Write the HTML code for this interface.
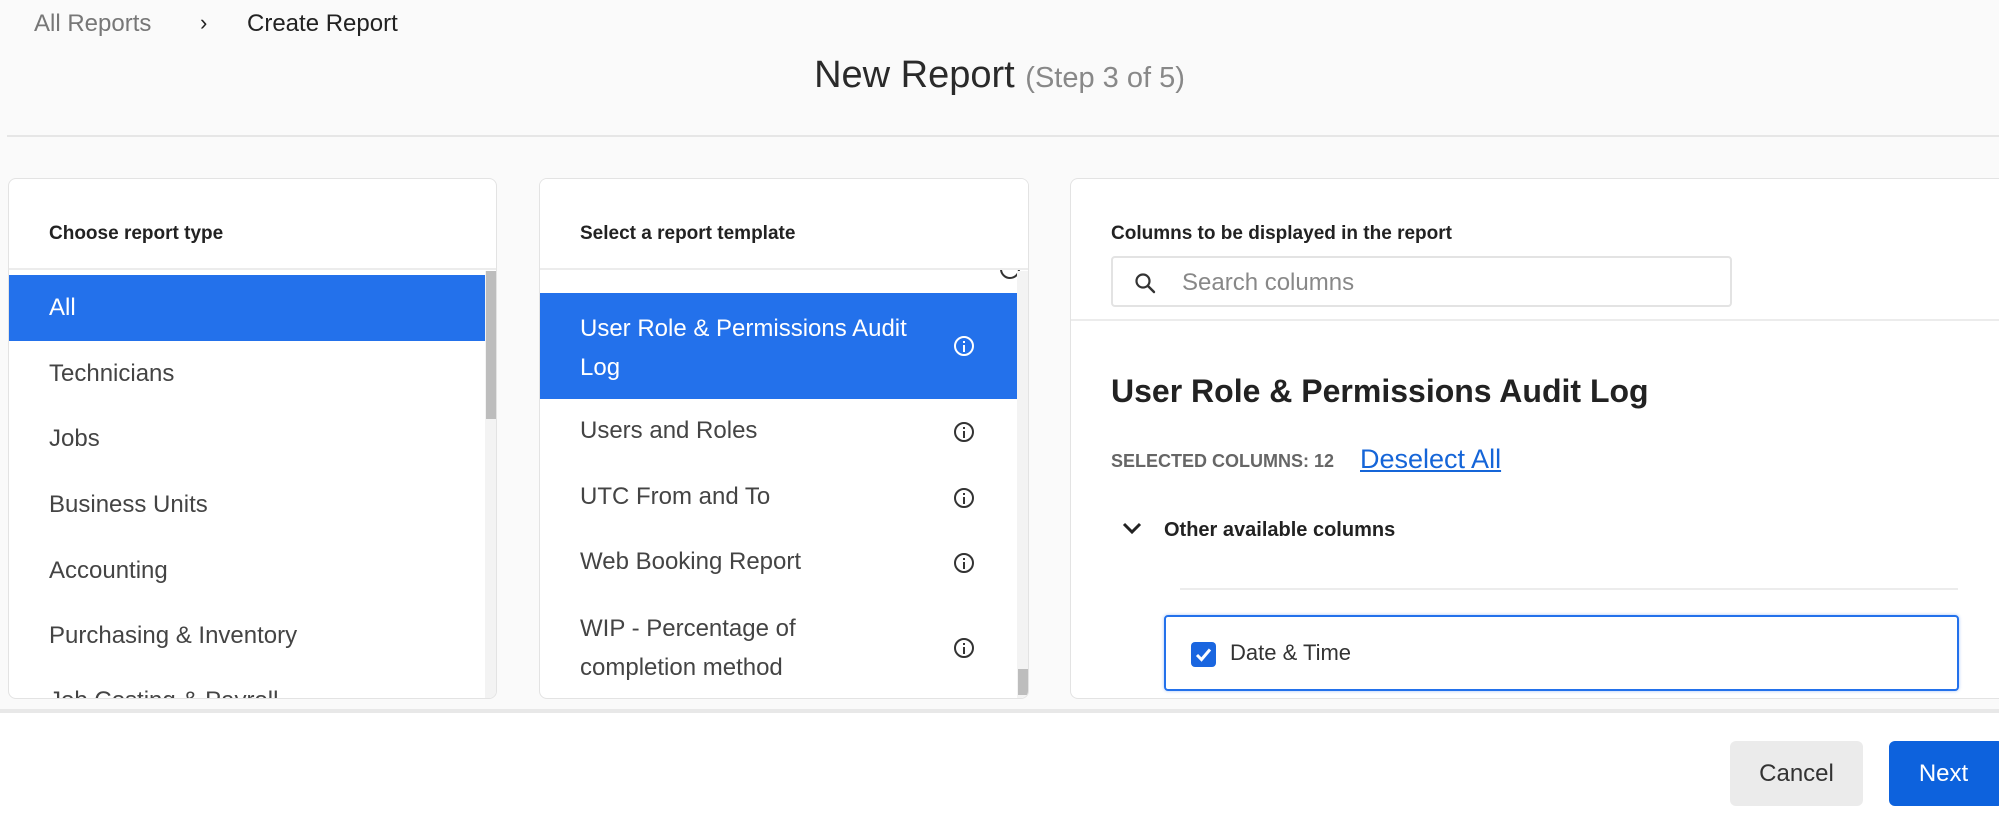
<!DOCTYPE html>
<html><head><meta charset="utf-8"><style>
*{box-sizing:border-box;margin:0;padding:0}
body{width:1999px;height:817px;overflow:hidden;background:#fafafa;font-family:"Liberation Sans",sans-serif;color:#2a2a2a;position:relative}
.abs{position:absolute}
.panel{position:absolute;top:178px;height:521px;background:#fff;border:1px solid #e3e3e3;border-radius:8px;overflow:hidden}
.ph{position:absolute;left:0;right:0;top:0;height:91px;border-bottom:2px solid #ececec}
.ph span{position:absolute;top:44px;font-size:19px;font-weight:bold;color:#222}
.item{position:absolute;left:0;font-size:24px;color:#444}
.info{position:absolute;width:20px;height:20px;border:2px solid #333;border-radius:50%}
.info:before{content:"";position:absolute;left:7px;top:3px;width:2px;height:2px;background:#333}
.info:after{content:"";position:absolute;left:7px;top:7px;width:2px;height:7px;background:#333}
.sel .info{border-color:#fff}.sel .info:before,.sel .info:after{background:#fff}
</style></head><body>
<div class="abs" style="left:34px;top:10px;font-size:24px;color:#777">All Reports</div>
<div class="abs" style="left:200px;top:10px;font-size:22px;color:#222">›</div>
<div class="abs" style="left:247px;top:10px;font-size:24px;color:#222">Create Report</div>
<div class="abs" style="left:0;width:1999px;top:54px;text-align:center;font-size:38px;color:#2a2a2a">New Report <span style="font-size:29px;color:#888">(Step 3 of 5)</span></div>
<div class="abs" style="left:7px;right:0;top:135px;height:2px;background:#e6e6e6"></div>

<div class="panel" style="left:8px;width:489px">
 <div class="ph"><span style="left:40px">Choose report type</span></div>
 <div class="abs" style="left:0;top:96px;width:476px;height:66px;background:#2371eb"></div>
 <div class="item" style="left:40px;top:115px;color:#fff">All</div>
 <div class="item" style="left:40px;top:181px">Technicians</div>
 <div class="item" style="left:40px;top:246px">Jobs</div>
 <div class="item" style="left:40px;top:312px">Business Units</div>
 <div class="item" style="left:40px;top:378px">Accounting</div>
 <div class="item" style="left:40px;top:443px">Purchasing &amp; Inventory</div>
 <div class="item" style="left:40px;top:508px">Job Costing &amp; Payroll</div>
 <div class="abs" style="left:476px;top:92px;width:13px;height:430px;background:#f3f3f3"></div>
 <div class="abs" style="left:477px;top:92px;width:11px;height:148px;background:#bdbdbd"></div>
</div>

<div class="panel" style="left:539px;width:490px">
 <div class="abs" style="left:460px;top:80px;width:20px;height:20px;border:2px solid #333;border-radius:50%"></div>
 <div class="ph" style="background:#fff"><span style="left:40px">Select a report template</span></div>
 <div class="abs sel" style="left:0;top:114px;width:477px;height:106px;background:#2371eb">
  <div class="item" style="left:40px;top:16px;color:#fff;line-height:39px">User Role &amp; Permissions Audit<br>Log</div>
  <div class="info" style="left:414px;top:43px"></div>
 </div>
 <div class="item" style="left:40px;top:238px">Users and Roles</div><div class="info" style="left:414px;top:243px"></div>
 <div class="item" style="left:40px;top:304px">UTC From and To</div><div class="info" style="left:414px;top:309px"></div>
 <div class="item" style="left:40px;top:369px">Web Booking Report</div><div class="info" style="left:414px;top:374px"></div>
 <div class="item" style="left:40px;top:430px;line-height:39px">WIP - Percentage of<br>completion method</div><div class="info" style="left:414px;top:459px"></div>
 <div class="abs" style="left:477px;top:92px;width:13px;height:430px;background:#f3f3f3"></div>
 <div class="abs" style="left:478px;top:490px;width:11px;height:26px;background:#bdbdbd"></div>
</div>

<div class="panel" style="left:1070px;width:940px;border-right:none">
 <div class="abs" style="left:40px;top:44px;font-size:19px;font-weight:bold;color:#222">Columns to be displayed in the report</div>
 <div class="abs" style="left:40px;top:77px;width:621px;height:51px;border:2px solid #e3e3e3;border-radius:4px">
  <svg class="abs" style="left:20px;top:13px" width="24" height="24" viewBox="0 0 24 24"><circle cx="10" cy="10" r="6.5" fill="none" stroke="#333" stroke-width="2.2"/><path d="M15 15l6 6" stroke="#333" stroke-width="2.4" stroke-linecap="round"/></svg>
  <span class="abs" style="left:69px;top:11px;font-size:24px;color:#888">Search columns</span>
 </div>
 <div class="abs" style="left:0;right:0;top:140px;height:2px;background:#ececec"></div>
 <div class="abs" style="right:0;top:142px;width:4px;height:60px;background:#ccc"></div>
 <div class="abs" style="left:40px;top:194px;font-size:32px;font-weight:bold;color:#222">User Role &amp; Permissions Audit Log</div>
 <div class="abs" style="left:40px;top:272px;font-size:18px;font-weight:bold;color:#666">SELECTED COLUMNS: 12</div>
 <div class="abs" style="left:289px;top:265px;font-size:27px;color:#1565d8;text-decoration:underline">Deselect All</div>
 <svg class="abs" style="left:50px;top:341px" width="22" height="16" viewBox="0 0 22 16"><path d="M3 4l8 8 8-8" fill="none" stroke="#222" stroke-width="3"/></svg>
 <div class="abs" style="left:93px;top:340px;font-size:20px;font-weight:bold;color:#222">Other available columns</div>
 <div class="abs" style="left:109px;top:409px;width:778px;height:2px;background:#ececec"></div>
 <div class="abs" style="left:93px;top:436px;width:795px;height:76px;border:2px solid #2371eb;border-radius:4px;box-shadow:0 0 3px rgba(35,113,235,.4)">
  <div class="abs" style="left:25px;top:25px;width:25px;height:25px;background:#1a66e0;border-radius:4px">
   <svg width="25" height="25" viewBox="0 0 25 25"><path d="M6 13l4.5 4.5L19 7.5" fill="none" stroke="#fff" stroke-width="3"/></svg>
  </div>
  <div class="abs" style="left:64px;top:23px;font-size:22px;color:#333">Date &amp; Time</div>
 </div>
</div>

<div class="abs" style="left:0;right:0;top:709px;height:4px;background:#e8e8e8"></div>
<div class="abs" style="left:0;right:0;top:713px;height:104px;background:#fff"></div>
<div class="abs" style="left:1730px;top:741px;width:133px;height:65px;background:#ebebeb;border-radius:6px;font-size:24px;color:#333;text-align:center;line-height:65px">Cancel</div>
<div class="abs" style="left:1889px;top:741px;width:115px;height:65px;background:#0d62dd;border-radius:6px;font-size:24px;color:#fff;text-align:center;line-height:65px;padding-right:6px">Next</div>
</body></html>
